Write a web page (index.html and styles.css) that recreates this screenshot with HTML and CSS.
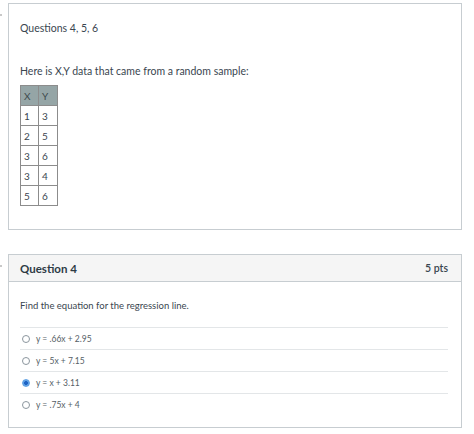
FILE: index.html
```html
<!DOCTYPE html>
<html>
<head>
<meta charset="utf-8">
<link rel="stylesheet" href="styles.css">
</head>
<body>
<div class="page">
  <div class="row row-first">
    <span class="gutter-dot"></span>
    <div class="box box-text">
      <p class="q-title">Questions 4, 5, 6</p>
      <p class="q-intro">Here is X,Y data that came from a random sample:</p>
      <table class="data">
        <thead><tr><th>X</th><th>Y</th></tr></thead>
        <tbody>
          <tr><td>1</td><td>3</td></tr>
          <tr><td>2</td><td>5</td></tr>
          <tr><td>3</td><td>6</td></tr>
          <tr><td>3</td><td>4</td></tr>
          <tr><td>5</td><td>6</td></tr>
        </tbody>
      </table>
    </div>
  </div>
  <div class="row row-second">
    <span class="gutter-dot"></span>
    <div class="box box-question">
      <div class="q-header">
        <span class="q-name">Question 4</span>
        <span class="q-pts">5 pts</span>
      </div>
      <div class="q-body">
        <p class="q-prompt">Find the equation for the regression line.</p>
        <ul class="answers">
          <li class="answer"><span class="radio"></span><span>y = .66x + 2.95</span></li>
          <li class="answer"><span class="radio"></span><span>y = 5x + 7.15</span></li>
          <li class="answer"><span class="radio radio-on"></span><span>y = x + 3.11</span></li>
          <li class="answer"><span class="radio"></span><span>y = .75x + 4</span></li>
        </ul>
      </div>
    </div>
  </div>
</div>
</body>
</html>
```
FILE: styles.css
```css
* { box-sizing: border-box; }
html, body { margin: 0; padding: 0; background: #fff; }
body {
  font-family: Lato, "Open Sans", sans-serif;
  color: #2d3b45;
}
.page { padding-top: 3px; width: 474px; }
.row { display: flex; align-items: flex-start; }
.row-second { margin-top: 24px; }
.gutter-dot {
  width: 8px; flex: 0 0 8px; display: flex;
}
.gutter-dot::before {
  content: ""; width: 2px; height: 2px; background: #c8c8c8; margin: 11px 0 0 0;
}
.box {
  width: 454px;
  border: 1px solid #c7cdd1;
  background: #fff;
}
.box-text { height: 227px; padding: 0 11px; }
.q-title { margin: 17px 0 0; font-size: 10.5px; line-height: 14px; color: #3a4650; }
.q-intro { margin: 29px 0 0; font-size: 10.5px; line-height: 14px; color: #3a4650; }
.data {
  border-collapse: collapse;
  margin-top: 7px;
  font-size: 10px;
  color: #3a4650;
}
.data th, .data td {
  border: 1px solid #8c8c8c;
  height: 20px;
  padding: 0 3px;
  text-align: left;
  font-weight: normal;
}
.data th:first-child, .data td:first-child { width: 18px; }
.data th:last-child, .data td:last-child { width: 19px; }
.data th { background: #95a5a6; color: #3d4a4c; }
.box-question { height: 174px; }
.q-header {
  display: flex; justify-content: space-between; align-items: center;
  height: 27px;
  background: #f5f5f5;
  border-bottom: 1px solid #c7cdd1;
  padding: 0 13px 0 11px;
}
.q-name { font-weight: bold; font-size: 11.5px; }
.q-pts { font-weight: 600; font-size: 10.5px; color: #3a4650; }
.q-body { padding: 0 13px 0 11px; }
.q-prompt { margin: 18px 0 0; font-size: 9.5px; line-height: 12px; color: #3a4650; }
.answers { list-style: none; margin: 15px 0 0; padding: 0; border-top: 1px solid #e3e6e8; }
.answer {
  display: flex; align-items: center;
  height: 22px;
  border-bottom: 1px solid #e3e6e8;
  font-size: 8.5px; color: #555e66;
  padding-left: 2px;
}
.answer:last-child { border-bottom: none; }
.radio {
  width: 8px; height: 8px; border-radius: 50%;
  border: 1px solid #8b969e; background: #fff;
  margin-right: 6px; flex: 0 0 8px;
}
.radio-on { border-color: #5fa1e4; background: radial-gradient(circle, #1d62c4 0 1.6px, #5fa1e4 2.2px); }
```
